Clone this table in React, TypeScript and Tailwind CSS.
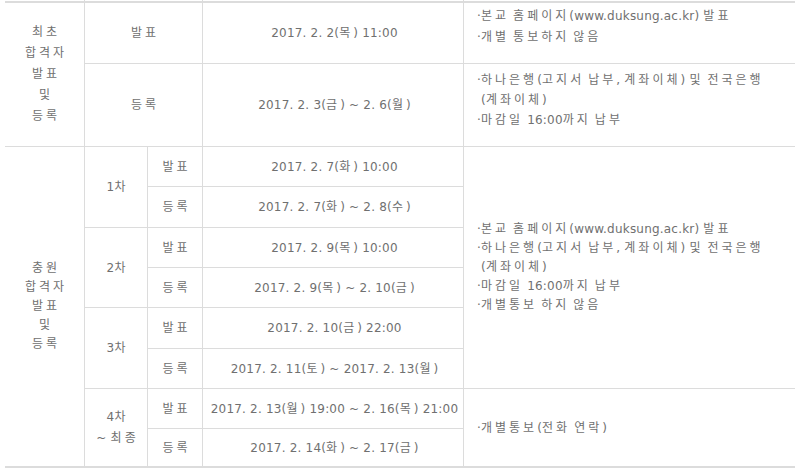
import type { ReactNode } from "react";

// Hangul runs are set wider than the Latin text, as in the original table
const T = ({ s }: { s: string }) => (
  <>
    {s.split(/([\uAC00-\uD7A3]+)/).map((part, i) =>
      i % 2 ? (
        <span key={i} className="tracking-[3px]">
          {part}
        </span>
      ) : (
        part
      )
    )}
  </>
);

const Note = ({ children }: { children: ReactNode }) => (
  <li className="flex">
    <span className="w-[4px] shrink-0">·</span>
    <span className="shrink-0">{children}</span>
  </li>
);

const Cell = ({ className, children }: { className: string; children: ReactNode }) => (
  <div className={`border-[#dcdcdc] flex items-center justify-center text-center pl-[3px] ${className}`}>
    {children}
  </div>
);

const App = () => {
  return (
    <div className="w-[800px] h-[471px] bg-white text-[12px] tracking-[0.2px] whitespace-nowrap text-[#707070] font-['DejaVu_Sans','Noto_Sans_CJK_KR',sans-serif]">
      {/* remnant of the row above */}
      <div className="ml-[5px] flex h-[1px]">
        <div className="w-[80px] border-r border-[#dcdcdc]" />
        <div className="w-[118px] border-r border-[#dcdcdc]" />
        <div className="w-[261px] border-r border-[#dcdcdc]" />
      </div>

      <div className="ml-[5px] w-[790px] border-t-2 border-b-2 border-[#dcdcdc] grid grid-cols-[80px_63px_55px_261px_331px] grid-rows-[61px_83px_40px_41px_40px_40px_41px_40px_40px_37px]">
        {/* 최초 합격자 */}
        <Cell className="col-start-1 row-start-1 row-span-2 border-r border-b leading-[21px]">
          <div>
            <T s="최초" />
            <br />
            <T s="합격자" />
            <br />
            <T s="발표" />
            <br />
            <T s="및" />
            <br />
            <T s="등록" />
          </div>
        </Cell>
        <Cell className="col-start-2 col-span-2 row-start-1 border-r border-b">
          <T s="발표" />
        </Cell>
        <Cell className="col-start-4 row-start-1 border-r border-b">
          <T s="2017. 2. 2(목) 11:00" />
        </Cell>
        <div className="col-start-5 row-start-1 border-b border-[#dcdcdc] pl-[13px] pt-[3px] leading-[21px]">
          <ul>
            <Note>
              <T s="본교 홈페이지(www.duksung.ac.kr) 발표" />
            </Note>
            <Note>
              <T s="개별 통보하지 않음" />
            </Note>
          </ul>
        </div>

        <Cell className="col-start-2 col-span-2 row-start-2 border-r border-b">
          <T s="등록" />
        </Cell>
        <Cell className="col-start-4 row-start-2 border-r border-b">
          <T s="2017. 2. 3(금) ~ 2. 6(월)" />
        </Cell>
        <div className="col-start-5 row-start-2 border-b border-[#dcdcdc] pl-[13px] pt-[6px] leading-[20px]">
          <ul>
            <Note>
              <T s="하나은행(고지서 납부, 계좌이체) 및 전국은행" />
              <br />
              <T s="(계좌이체)" />
            </Note>
            <Note>
              <T s="마감일 16:00까지 납부" />
            </Note>
          </ul>
        </div>

        {/* 충원 합격자 */}
        <Cell className="col-start-1 row-start-3 row-span-8 border-r leading-[19px]">
          <div>
            <T s="충원" />
            <br />
            <T s="합격자" />
            <br />
            <T s="발표" />
            <br />
            <T s="및" />
            <br />
            <T s="등록" />
          </div>
        </Cell>

        <Cell className="col-start-2 row-start-3 row-span-2 border-r border-b">
          <T s="1차" />
        </Cell>
        <Cell className="col-start-3 row-start-3 border-r border-b">
          <T s="발표" />
        </Cell>
        <Cell className="col-start-4 row-start-3 border-r border-b">
          <T s="2017. 2. 7(화) 10:00" />
        </Cell>
        <Cell className="col-start-3 row-start-4 border-r border-b">
          <T s="등록" />
        </Cell>
        <Cell className="col-start-4 row-start-4 border-r border-b">
          <T s="2017. 2. 7(화) ~ 2. 8(수)" />
        </Cell>

        <div className="col-start-5 row-start-3 row-span-6 border-b border-[#dcdcdc] pl-[13px] flex items-center leading-[19px]">
          <ul>
            <Note>
              <T s="본교 홈페이지(www.duksung.ac.kr) 발표" />
            </Note>
            <Note>
              <T s="하나은행(고지서 납부, 계좌이체) 및 전국은행" />
              <br />
              <T s="(계좌이체)" />
            </Note>
            <Note>
              <T s="마감일 16:00까지 납부" />
            </Note>
            <Note>
              <T s="개별통보 하지 않음" />
            </Note>
          </ul>
        </div>

        <Cell className="col-start-2 row-start-5 row-span-2 border-r border-b">
          <T s="2차" />
        </Cell>
        <Cell className="col-start-3 row-start-5 border-r border-b">
          <T s="발표" />
        </Cell>
        <Cell className="col-start-4 row-start-5 border-r border-b">
          <T s="2017. 2. 9(목) 10:00" />
        </Cell>
        <Cell className="col-start-3 row-start-6 border-r border-b">
          <T s="등록" />
        </Cell>
        <Cell className="col-start-4 row-start-6 border-r border-b">
          <T s="2017. 2. 9(목) ~ 2. 10(금)" />
        </Cell>

        <Cell className="col-start-2 row-start-7 row-span-2 border-r border-b">
          <T s="3차" />
        </Cell>
        <Cell className="col-start-3 row-start-7 border-r border-b">
          <T s="발표" />
        </Cell>
        <Cell className="col-start-4 row-start-7 border-r border-b">
          <T s="2017. 2. 10(금) 22:00" />
        </Cell>
        <Cell className="col-start-3 row-start-8 border-r border-b">
          <T s="등록" />
        </Cell>
        <Cell className="col-start-4 row-start-8 border-r border-b">
          <T s="2017. 2. 11(토) ~ 2017. 2. 13(월)" />
        </Cell>

        <Cell className="col-start-2 row-start-9 row-span-2 border-r leading-[21px]">
          <div>
            <T s="4차" />
            <br />
            <T s="~ 최종" />
          </div>
        </Cell>
        <Cell className="col-start-3 row-start-9 border-r border-b">
          <T s="발표" />
        </Cell>
        <Cell className="col-start-4 row-start-9 border-r border-b">
          <T s="2017. 2. 13(월) 19:00 ~ 2. 16(목) 21:00" />
        </Cell>
        <Cell className="col-start-3 row-start-10 border-r">
          <T s="등록" />
        </Cell>
        <Cell className="col-start-4 row-start-10 border-r">
          <T s="2017. 2. 14(화) ~ 2. 17(금)" />
        </Cell>

        <div className="col-start-5 row-start-9 row-span-2 pl-[13px] flex items-center">
          <ul>
            <Note>
              <T s="개별통보(전화 연락)" />
            </Note>
          </ul>
        </div>
      </div>
    </div>
  );
};

export default App;
